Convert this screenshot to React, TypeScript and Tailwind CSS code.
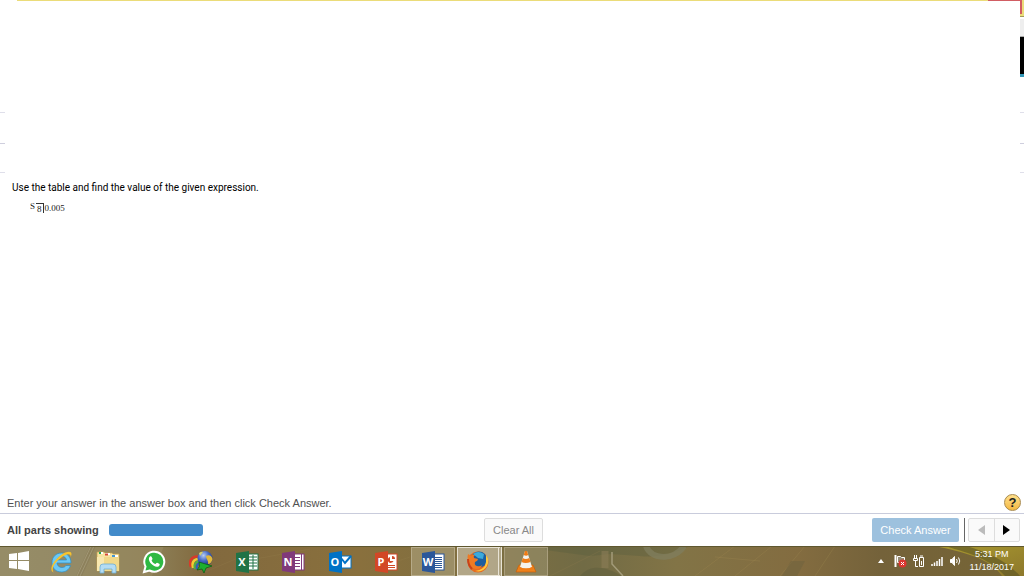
import type { ReactNode } from 'react';

function Wallpaper() {
  return (
    <svg className="absolute inset-0 h-full w-full" viewBox="0 0 1024 30" preserveAspectRatio="none" aria-hidden="true">
      <defs>
        <linearGradient id="wood" x1="0" x2="1" y1="0" y2="0">
          <stop offset="0" stopColor="#8f855e" />
          <stop offset="0.08" stopColor="#8d815c" />
          <stop offset="0.16" stopColor="#8a7b52" />
          <stop offset="0.2" stopColor="#82693e" />
          <stop offset="0.35" stopColor="#89703d" />
          <stop offset="0.5" stopColor="#7b6e42" />
          <stop offset="0.57" stopColor="#716b45" />
          <stop offset="0.66" stopColor="#827446" />
          <stop offset="0.78" stopColor="#836c40" />
          <stop offset="0.86" stopColor="#74623a" />
          <stop offset="1" stopColor="#766535" />
        </linearGradient>
        <linearGradient id="yellow" x1="0" x2="1" y1="0" y2="1">
          <stop offset="0" stopColor="#aa9a2e" />
          <stop offset="1" stopColor="#8d782c" />
        </linearGradient>
      </defs>
      <rect width="1024" height="30" fill="url(#wood)" />
      <path d="M0 0H90L76 30H0Z" fill="#a39b79" opacity="0.35" />
      <path d="M96 0H164L152 30H82Z" fill="#a89d72" opacity="0.3" />
      <path d="M91 0L77 30M94 0L80 30" stroke="#aaa080" strokeWidth="1" opacity="0.7" />
      <path d="M545 0H690C672 8 656 12 640 10L610 8 590 10 545 4Z" fill="#595e3f" opacity="0.4" />
      <path d="M580 30C590 18 605 20 622 30Z" fill="#55583a" opacity="0.35" />
      <path d="M646 0C651 14 674 15 684 0" fill="none" stroke="#807d5c" strokeWidth="6" opacity="0.8" />
      <path d="M605 5V22" fill="none" stroke="#8f805a" strokeWidth="7" opacity="0.5" />
      <path d="M612 6V18L623 30" fill="none" stroke="#a39b79" strokeWidth="1.500" />
      <path d="M735 0L695 30M772 0L735 30M805 0L780 30M835 0L815 30M715 11L760 15" stroke="#99824e" strokeWidth="1" opacity="0.4" fill="none" />
      <path d="M791 15H805L797 30H782Z" fill="#6e623e" opacity="0.5" />
      <path d="M550 30L600 5M250 14L310 3M370 24L410 11M205 26L245 9" stroke="#9b8553" strokeWidth="1" opacity="0.2" />
      <path d="M935 0H1024V30H1002C990 12 963 6 935 0Z" fill="url(#yellow)" />
      <path d="M945 0H966C988 6 1008 16 1020 30H1005C990 13 972 8 945 0Z" fill="#5f5726" opacity="0.65" />
      <rect width="1024" height="1" fill="#5f572f" />
    </svg>
  );
}

type OfficeProps = { letter: string; color: string; children: ReactNode };

function OfficeIcon({ letter, color, children }: OfficeProps) {
  return (
    <svg width="24" height="24" viewBox="0 0 24 24" aria-hidden="true">
      <rect x="11" y="4" width="12" height="16" fill="#fff" stroke={color} strokeWidth="1" />
      {children}
      <path d="M1 3L14 1V23L1 21Z" fill={color} />
      <text x="7" y="16" textAnchor="middle" fontSize="11" fontWeight="700" fill="#fff" fontFamily="'Open Sans', sans-serif">{letter}</text>
    </svg>
  );
}

function WindowsIcon() {
  return (
    <svg width="20" height="20" viewBox="0 0 20 20" fill="#fff" aria-hidden="true">
      <path d="M0 3L8 2V9H0ZM9 2L20 0V9H9ZM0 10H8V18L0 17ZM9 10H20V20L9 18Z" />
    </svg>
  );
}

function ExplorerIcon() {
  return (
    <svg width="24" height="24" viewBox="0 0 24 24" aria-hidden="true">
      <path d="M22 13H8c.4 3 2.400 4.500 5 4.500 2 0 3-.7 4-2h4.500C20 20 16.500 22 12.500 22 6.500 22 3 18 3 12.500 3 7 7 3 12.500 3 18.500 3 22 7 22 13ZM8 10h9.500C17 7.500 15.200 6.300 13 6.300 10.500 6.300 8.500 7.500 8 10Z" fill="#6cc8f4" stroke="#2b8fca" strokeWidth="0.7" />
      <path d="M4.500 22.500C-1 20 5 10 12 5 17 1.500 22.500.5 22.500 4c0 1-.4 2-.8 3 .2-3-2-3.500-6-1.500C8 9.500 1.500 17 4.500 22.500Z" fill="#f8c32c" />
    </svg>
  );
}

function FolderIcon() {
  return (
    <svg width="24" height="24" viewBox="0 0 24 24" aria-hidden="true">
      <path d="M1 2h7l1 1h7l1 1h6v17H1Z" fill="#f7e4a0" stroke="#c5a24b" strokeWidth="0.7" />
      <path d="M3 2h4v2H3ZM9 3h5v2H9ZM16 5h6v2h-6Z" fill="#fff" />
      <path d="M3 2h2v2H3Z" fill="#26a852" />
      <path d="M9 3.500h3v2H9Z" fill="#d64a39" />
      <path d="M16 5h3v2h-3Z" fill="#4696d0" />
      <path d="M1 7h22v14H1Z" fill="#f1d98a" />
      <path d="M1 7h7v14H1Z" fill="#f8e8b0" />
      <path d="M4 23v-6q0-3 3-3h10q3 0 3 3v6h-4v-4H8v4Z" fill="#b4dcf3" stroke="#6dadd4" strokeWidth="0.8" />
    </svg>
  );
}

function WhatsAppIcon() {
  return (
    <svg width="24" height="24" viewBox="0 0 24 24" aria-hidden="true">
      <path d="M2 22L3.500 16.500A10 10 0 1 1 7.500 20.500Z" fill="#2eb943" stroke="#fff" strokeWidth="2" />
      <path d="M8 6.500c.6-.5 1.300-.4 1.600.3l.9 2c.2.500-.7 1.200-.9 1.600.8 1.700 2 2.800 3.800 3.600.6-.2 1.200-1.500 1.700-1.300l2.200 1c.7.400.5 2-.8 2.700-2.500 1.200-5.500-.7-7.300-2.600C7.300 11.700 5.800 8.500 8 6.500Z" fill="#fff" />
    </svg>
  );
}

function DownloadManagerIcon() {
  return (
    <svg width="24" height="24" viewBox="0 0 24 24" aria-hidden="true">
      <defs>
        <radialGradient id="globe" cx="0.4" cy="0.3" r="0.7">
          <stop offset="0" stopColor="#b8cdf2" />
          <stop offset="0.5" stopColor="#4569c4" />
          <stop offset="1" stopColor="#1d3580" />
        </radialGradient>
      </defs>
      <path d="M2 17C-1 9 5 4 13 8" fill="none" stroke="#dc3928" strokeWidth="2.500" />
      <path d="M4 18C2 11 7 7 13 10" fill="none" stroke="#f2cb31" strokeWidth="2.500" />
      <path d="M6 19C4 13 9 10 13 12" fill="none" stroke="#4cb04a" strokeWidth="2" />
      <path d="M8 19C7 15 9 12 14 14" fill="none" stroke="#2d61bc" strokeWidth="2" />
      <circle cx="16" cy="8.500" r="7.500" fill="url(#globe)" />
      <path d="M17 6C20 4 23 6 23.500 9 23 12 21 14 19 14 20 11 17 9 17 6Z" fill="#e0b83c" />
      <path d="M10 3Q13 1 14 2L11 6Z" fill="#d8d06a" />
      <path d="M10 12L23 16 17 18 15 23 13 19 8 20Q12 17 10 12Z" fill="#1cae30" stroke="#075b13" strokeWidth="0.7" />
    </svg>
  );
}

function FirefoxIcon() {
  return (
    <svg width="24" height="24" viewBox="0 0 24 24" aria-hidden="true">
      <circle cx="12" cy="12" r="10.500" fill="#e66b20" />
      <circle cx="13" cy="9.500" r="8" fill="#1e5e9e" />
      <path d="M7 4Q12 0 18 4L17 9 12 8Z" fill="#3baadc" />
      <path d="M2 4L5 6Q7 4 9 5 7 6 8 8l4 1q0 2-3 3-1 3 2 4 3 1 5-1-1 4-6 4-8-1-8-9Q1 7 2 4Z" fill="#ef7a22" />
      <path d="M20 5Q24 10 21 16 17 23 9 21q10-1 11-9Z" fill="#ffc83e" />
      <path d="M2 9Q2 15 6 19" fill="none" stroke="#c7431b" strokeWidth="2" />
    </svg>
  );
}

function VlcIcon() {
  return (
    <svg width="24" height="24" viewBox="0 0 24 24" aria-hidden="true">
      <path d="M5 15h14l3 7H2Z" fill="#ee831c" stroke="#c55e08" strokeWidth="0.7" />
      <path d="M11 1h2l5 16q-6 3-12 0Z" fill="#f5f3ed" />
      <path d="M11 1h2l1.200 4q-2 1.500-4.500 0ZM8.800 8q3 2 6.400 0l1.300 4q-5 2-9 0Z" fill="#ef7c16" />
      <path d="M5.500 17q6.500 3 13 0l1 2q-7 3-15 0Z" fill="#ef7c16" />
    </svg>
  );
}

const apps: { name: string; frame: string; icon: ReactNode }[] = [
  { name: 'Internet Explorer', frame: '', icon: <ExplorerIcon /> },
  { name: 'File Explorer', frame: '', icon: <FolderIcon /> },
  { name: 'WhatsApp', frame: '', icon: <WhatsAppIcon /> },
  { name: 'Download Manager', frame: '', icon: <DownloadManagerIcon /> },
  {
    name: 'Excel',
    frame: '',
    icon: (
      <OfficeIcon letter="X" color="#217346">
        <path d="M14 7h8M14 10h8M14 13h8M14 16h8M18 5v14" stroke="#217346" />
      </OfficeIcon>
    ),
  },
  {
    name: 'OneNote',
    frame: '',
    icon: (
      <OfficeIcon letter="N" color="#80397b">
        <path d="M14 7.500h5M14 10.500h5M14 13.500h5M14 16.500h5M20.500 4v16" stroke="#80397b" />
      </OfficeIcon>
    ),
  },
  {
    name: 'Outlook',
    frame: '',
    icon: (
      <svg width="24" height="24" viewBox="0 0 24 24" aria-hidden="true">
        <rect x="12" y="6" width="11" height="12" fill="#fff" stroke="#0072c6" />
        <path d="M13 8l4 5 6-7" fill="none" stroke="#0072c6" strokeWidth="2" />
        <path d="M1 3L14 1V23L1 21Z" fill="#0072c6" />
        <text x="7" y="16" textAnchor="middle" fontSize="11" fontWeight="700" fill="#fff" fontFamily="'Open Sans', sans-serif">O</text>
      </svg>
    ),
  },
  {
    name: 'PowerPoint',
    frame: '',
    icon: (
      <OfficeIcon letter="P" color="#d24726">
        <path d="M16 7a3 3 0 1 0 3.500 4H16ZM18 6a3 3 0 0 1 3 3h-3Z" fill="#d24726" />
        <path d="M14 15.500h7M14 17.500h7" stroke="#d24726" />
      </OfficeIcon>
    ),
  },
  {
    name: 'Word',
    frame: 'border-[#b6aa88] bg-[#c4bda066]',
    icon: (
      <OfficeIcon letter="W" color="#2b579a">
        <path d="M14 7.500h7M14 9.500h7M14 11.500h7M14 13.500h7M14 15.500h7M14 17.500h7" stroke="#2b579a" />
      </OfficeIcon>
    ),
  },
  { name: 'Firefox', frame: 'border-[#e8e3d5] bg-[#d4ccb899] border-r-4 border-double', icon: <FirefoxIcon /> },
  { name: 'VLC media player', frame: 'border-[#a99e7d] bg-[#bdb5984d]', icon: <VlcIcon /> },
];

function TrayIcons() {
  return (
    <>
      <svg width="6" height="4" viewBox="0 0 6 4" aria-hidden="true"><path d="M0 4L3 0 6 4Z" fill="#fff" /></svg>
      <svg className="ml-2.5" width="13" height="14" viewBox="0 0 13 14" aria-hidden="true">
        <path d="M1.500 1v12" stroke="#fff" strokeWidth="2" />
        <path d="M3.500 2.500h3l1 1h3v5h-7Z" fill="#958b74" stroke="#fff" />
        <circle cx="8.500" cy="9.500" r="4" fill="#dc3630" />
        <path d="M7 8l3 3m0-3l-3 3" stroke="#fff" />
      </svg>
      <svg className="ml-1.5" width="12" height="14" viewBox="0 0 12 14" fill="none" stroke="#fff" aria-hidden="true">
        <path d="M1.500 1v3M3.500 1v3M.5 4.500h4v2h-4ZM2.500 7v5.500H5M6.500 3.500h4v9h-4Z" />
        <path d="M7 2h3M8.500 7v4" />
      </svg>
      <svg className="ml-1.5" width="13" height="12" viewBox="0 0 13 12" fill="none" stroke="#fff" aria-hidden="true">
        <path d="M1 9v2M3.500 7.500V11M6 6v5M8.500 4v7M11 2v9" strokeWidth="1.500" />
      </svg>
      <svg className="ml-1.5" width="12" height="12" viewBox="0 0 12 12" fill="none" stroke="#fff" aria-hidden="true">
        <path d="M.5 4.500H2l2.500-3v9L2 7.500H.5Z" fill="#fff" />
        <path d="M6.500 4q1.500 2 0 4M8.500 2.500q2.500 3.500 0 7" />
      </svg>
    </>
  );
}

function LeftEdge() {
  return (
    <div className="w-[5px] shrink-0 pt-28">
      <div className="h-[31px] border-t border-[#dfdfea]" />
      <div className="h-[29px] border-t border-[#cfcfde]" />
      <div className="border-t border-[#dfdfea]" />
    </div>
  );
}

function RightEdge() {
  return (
    <div className="w-1 shrink-0">
      <div className="flex h-[17px] border-b border-[#a09a5a] bg-[#ebdc79]">
        <div className="h-3.5 w-0.5 bg-[#d15d63]" />
      </div>
      <div className="mt-0.5 h-[18px] border-b border-[#aaa] bg-[#eee]" />
      <div className="h-[37px] bg-black" />
      <div className="mb-[35px] h-[3px] bg-[#3398b8]" />
      <div className="h-[31px] border-t border-[#dfdfea]" />
      <div className="h-[29px] border-t border-[#cfcfde]" />
      <div className="border-t border-[#dfdfea]" />
    </div>
  );
}

export default function App() {
  return (
    <div className="flex h-screen flex-col overflow-hidden bg-white font-['Liberation_Sans',Arial,sans-serif]">
      <div className="flex min-h-0 flex-1">
        <LeftEdge />
        <main className="min-w-0 flex-1">
          <div className="flex h-px pl-3">
            <div className="flex-1 bg-[#ebdc79]" />
            <div className="w-8 bg-[#d15d63]" />
          </div>
          <div className="px-[7px] pt-[181px] text-black">
            <p className="font-[Roboto,sans-serif] text-[10px] leading-3">Use the table and find the value of the given expression.</p>
            <div className="mt-2 flex items-start gap-px pl-[18px] font-['Liberation_Serif',serif] text-[9px] leading-3 text-[#222]">
              <span className="-mt-0.5">S</span>
              <span className="mt-px h-2.5 border-t border-r border-[#333] px-px leading-[10px]">8</span>
              <span>0.005</span>
            </div>
          </div>
        </main>
        <RightEdge />
      </div>

      <div className="flex items-center justify-between pr-[3px] pb-0.5 pl-[7px]">
        <p className="text-[11px] leading-4 text-[#505050]">Enter your answer in the answer box and then click Check Answer.</p>
        <button type="button" aria-label="Help" className="size-[17px] rounded-full border border-[#a98a4c] bg-linear-to-b from-[#ffe08a] to-[#f4b83f] text-[13px] leading-[15px] font-bold text-[#222]">?</button>
      </div>

      <footer className="grid h-[33px] shrink-0 grid-cols-[1fr_auto_1fr] items-center border-t border-[#c9ccdc] pr-1 pl-[7px] text-[11px]">
        <div className="flex items-center gap-2.5">
          <span className="font-bold text-[#444]">All parts showing</span>
          <div className="h-3 w-[94px] rounded-[3px] bg-[#428bca]" />
        </div>
        <button type="button" className="h-6 w-[59px] rounded-xs border border-[#ddd] bg-[#fafafa] text-[#888]">Clear All</button>
        <div className="flex items-center justify-end">
          <button type="button" className="h-6 w-[87px] rounded-xs bg-[#9dc1de] text-white">Check Answer</button>
          <div className="mr-[3px] ml-[5px] h-6 w-px bg-[#666]" />
          <div className="flex h-6 w-[52px] rounded-xs border border-[#ddd] bg-[#fafafa]">
            <button type="button" aria-label="Previous" className="flex flex-1 items-center justify-center border-r border-[#ddd]">
              <svg width="7" height="10" viewBox="0 0 7 10" fill="#bbb"><path d="M7 0V10L0 5Z" /></svg>
            </button>
            <button type="button" aria-label="Next" className="flex flex-1 items-center justify-center">
              <svg width="7" height="10" viewBox="0 0 7 10" fill="#000"><path d="M0 0V10L7 5Z" /></svg>
            </button>
          </div>
        </div>
      </footer>

      <nav className="relative h-[30px] shrink-0 overflow-hidden">
        <Wallpaper />
        <div className="relative flex h-full items-center">
          <button type="button" aria-label="Start" className="flex w-[38px] justify-center"><WindowsIcon /></button>
          <div className="flex h-full w-[511px] pt-px">
            {apps.map(app => (
              <button key={app.name} type="button" aria-label={app.name} className="flex flex-1 px-px">
                <span className={`flex h-full flex-1 items-center justify-center ${app.frame ? 'border ' + app.frame : ''}`}>{app.icon}</span>
              </button>
            ))}
          </div>
          <div className="ml-auto flex items-center pr-2.5">
            <TrayIcons />
            <div className="ml-2 text-center text-[9px] leading-[13px] text-white">
              <div>5:31 PM</div>
              <div>11/18/2017</div>
            </div>
          </div>
        </div>
      </nav>
    </div>
  );
}
